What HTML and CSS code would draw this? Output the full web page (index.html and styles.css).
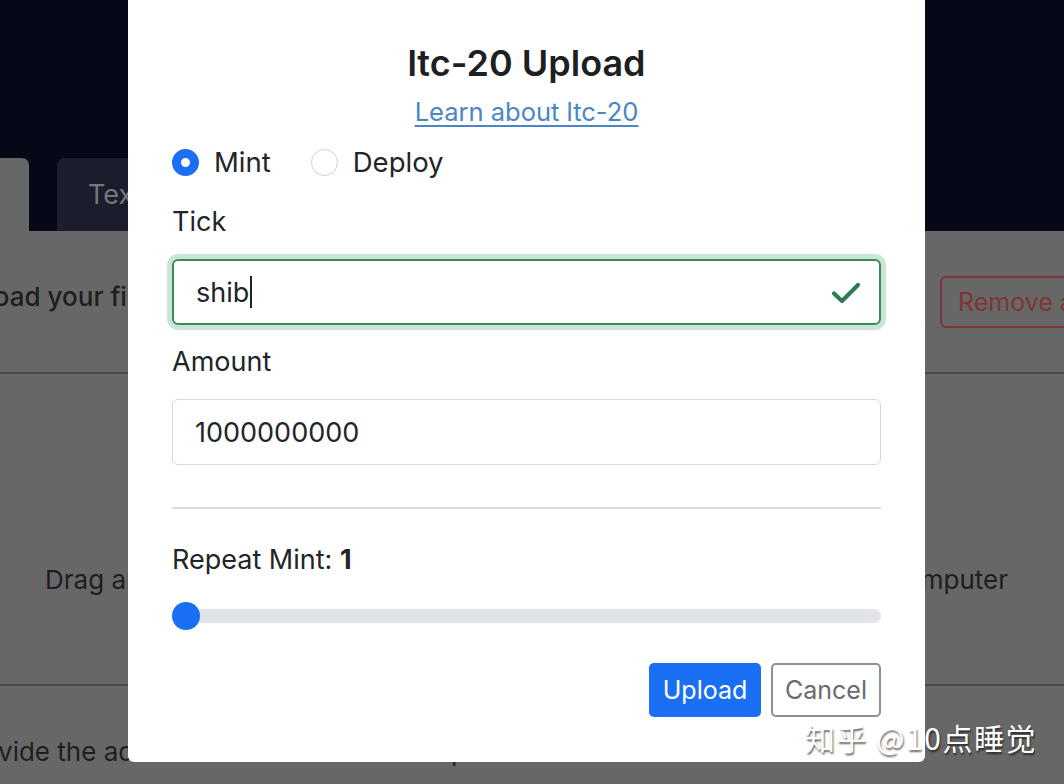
FILE: index.html
```html
<!DOCTYPE html>
<html lang="en">
<head>
    <meta charset="UTF-8">
    <meta name="viewport" content="width=device-width, initial-scale=1.0">
    <title>ltc-20 Upload</title>
    <link rel="stylesheet" href="styles.css">
</head>
<body>
    <div class="page">
        <header class="topbar">
            <nav class="tabs">
                <div class="tab tab-active">Files</div>
                <div class="tab">Text</div>
            </nav>
        </header>
        <main class="panel">
            <div class="toolbar">
                <span class="toolbar-title">Upload your files</span>
                <button class="btn-remove">Remove all</button>
            </div>
            <div class="dropzone">
                <span>Drag and drop</span>
                <span>or select from your computer</span>
            </div>
            <p class="hint">Provide the address to receive the inscriptions</p>
        </main>
    </div>

    <div class="modal">
        <h2 class="modal-title">ltc-20 Upload</h2>
        <a class="modal-link" href="#">Learn about ltc-20</a>

        <div class="radios">
            <label class="radio"><span class="radio-dot checked"></span>Mint</label>
            <label class="radio"><span class="radio-dot"></span>Deploy</label>
        </div>

        <label class="field-label">Tick</label>
        <div class="input input-valid">
            <span class="input-text">shib<span class="caret"></span></span>
            <svg class="check" width="30" height="24" viewBox="0 0 30 24">
                <path d="M3 12.5 L11 20 L27 4" fill="none" stroke="#2c7d4f" stroke-width="4.2" stroke-linecap="round" stroke-linejoin="round"/>
            </svg>
        </div>

        <label class="field-label">Amount</label>
        <div class="input">
            <span class="input-text">1000000000</span>
        </div>

        <hr class="divider">

        <div class="field-label repeat">Repeat Mint: <b>1</b></div>
        <div class="slider">
            <span class="slider-thumb"></span>
        </div>

        <div class="actions">
            <button class="btn btn-primary">Upload</button>
            <button class="btn btn-outline">Cancel</button>
        </div>
    </div>

    <div class="watermark">知乎 @10点睡觉</div>
</body>
</html>
```

FILE: styles.css
```css
body {
    margin: 0;
    width: 1064px;
    height: 784px;
    overflow: hidden;
    background: #676767;
    font-family: Inter, "Liberation Sans", sans-serif;
    color: #212529;
}

/* page behind the dialog (already dimmed) */
.topbar {
    height: 231px;
    background: #050816;
    display: flex;
    align-items: flex-end;
}
.tabs {
    display: flex;
    gap: 28px;
    margin-left: -171px;
}
.tab {
    width: 200px;
    height: 73px;
    border-radius: 7px 7px 0 0;
    background: #1b1d2d;
    color: #76777f;
    font-size: 27px;
    line-height: 73px;
    padding-left: 31px;
    box-sizing: border-box;
}
.tab-active {
    background: #676767;
    color: #676767;
}
.toolbar {
    height: 141px;
    border-bottom: 2px solid #4a4a4a;
    display: flex;
    align-items: center;
    justify-content: space-between;
}
.toolbar-title {
    margin-left: -48px;
    margin-top: -10px;
    font-size: 26px;
    font-weight: 500;
    color: #1e1e1e;
}
.btn-remove {
    margin-right: -90px;
    width: 214px;
    height: 52px;
    background: transparent;
    border: 2px solid #7e3538;
    border-radius: 6px;
    color: #7e3538;
    font-family: inherit;
    font-size: 25px;
    text-align: left;
    padding-left: 16px;
}
.dropzone {
    height: 312px;
    box-sizing: border-box;
    border-bottom: 2px solid #4a4a4a;
    display: flex;
    justify-content: space-between;
    padding: 190px 56px 0 45px;
    font-size: 26px;
    color: #1e1e1e;
}
.hint {
    margin: 50px 0 0 -43px;
    font-size: 26px;
    color: #1e1e1e;
}

/* dialog */
.modal {
    position: absolute;
    left: 128px;
    top: 0;
    width: 797px;
    height: 762px;
    box-sizing: border-box;
    padding: 39px 44px 0 44px;
    background: #fff;
    border-radius: 0 0 6px 6px;
    display: flex;
    flex-direction: column;
}
.modal-title {
    margin: 0;
    text-align: center;
    font-size: 36px;
    font-weight: 600;
    line-height: 48px;
    color: #1d1f22;
}
.modal-link {
    align-self: center;
    margin-top: 9px;
    font-size: 25.5px;
    line-height: 32px;
    color: #4a86c6;
    text-decoration: underline;
    text-underline-offset: 4px;
}
.radios {
    display: flex;
    gap: 40px;
    margin-top: 16px;
}
.radio {
    display: flex;
    align-items: center;
    gap: 15px;
    font-size: 27.5px;
    line-height: 36px;
}
.radio-dot {
    width: 27px;
    height: 27px;
    box-sizing: border-box;
    border-radius: 50%;
    border: 1.5px solid #cdd0d4;
}
.radio-dot.checked {
    border: 9px solid #1a6ff5;
    background: #fff;
}
.field-label {
    display: block;
    margin-top: 24px;
    font-size: 27px;
    line-height: 36px;
}
.input {
    margin-top: 19px;
    height: 66px;
    box-sizing: border-box;
    border: 1.5px solid #d6d9dc;
    border-radius: 6px;
    display: flex;
    align-items: center;
    justify-content: space-between;
    padding: 0 18px 0 22px;
    font-size: 27px;
}
.input-valid {
    border: 2px solid #3a8a5c;
    box-shadow: 0 0 0 5px #cbe5d5;
}
.input-text {
    display: flex;
    align-items: center;
}
.caret {
    width: 1.5px;
    height: 32px;
    margin-left: 1px;
    background: #222;
}
.input + .field-label {
    margin-top: 19px;
}
.check {
    margin-top: 2px;
}
.divider {
    margin: 42px 0 0 0;
    border: none;
    border-top: 2px solid #dcdcdc;
}
.field-label.repeat {
    margin-top: 33px;
}
.slider {
    margin-top: 31px;
    height: 14px;
    border-radius: 7px;
    background: #e1e4e9;
    display: flex;
    align-items: center;
}
.slider-thumb {
    width: 28px;
    height: 28px;
    border-radius: 50%;
    background: #1a6ff5;
}
.actions {
    display: flex;
    justify-content: flex-end;
    gap: 10px;
    margin-top: 40px;
}
.btn {
    height: 54px;
    border-radius: 5px;
    font-family: inherit;
    font-size: 25px;
    padding: 0;
}
.btn-primary {
    width: 112px;
    background: #1a6ff5;
    border: none;
    color: #fff;
}
.btn-outline {
    width: 110px;
    background: #fff;
    border: 2px solid #8f8f8f;
    color: #6b6b6b;
}

.watermark {
    position: absolute;
    left: 805px;
    top: 715px;
    font-family: "Noto Sans CJK SC", sans-serif;
    font-size: 30px;
    color: #fff;
    text-shadow: 1px 2px 2px rgba(0, 0, 0, 0.6);
    letter-spacing: 1.5px;
}
```
